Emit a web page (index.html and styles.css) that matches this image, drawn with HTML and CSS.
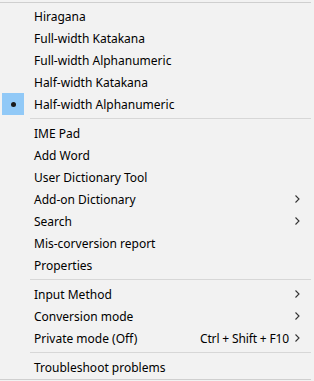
FILE: index.html
```html
<!DOCTYPE html>
<html lang="en">
<head>
    <meta charset="UTF-8">
    <meta name="viewport" content="width=device-width, initial-scale=1.0">
    <title>IME Menu</title>
    <link rel="stylesheet" href="styles.css">
</head>
<body>
    <div class="menu">
        <!-- Input modes -->
        <div class="menu-item"><span class="label">Hiragana</span></div>
        <div class="menu-item"><span class="label">Full-width Katakana</span></div>
        <div class="menu-item"><span class="label">Full-width Alphanumeric</span></div>
        <div class="menu-item"><span class="label">Half-width Katakana</span></div>
        <div class="menu-item checked">
            <span class="check"><span class="dot"></span></span>
            <span class="label">Half-width Alphanumeric</span>
        </div>

        <div class="separator"></div>

        <div class="menu-item"><span class="label">IME Pad</span></div>
        <div class="menu-item"><span class="label">Add Word</span></div>
        <div class="menu-item"><span class="label">User Dictionary Tool</span></div>
        <div class="menu-item">
            <span class="label">Add-on Dictionary</span>
            <svg class="arrow" width="5" height="8" viewBox="0 0 5 8"><polyline points="0.5,0.5 4,4 0.5,7.5" fill="none" stroke="#333" stroke-width="1.1"/></svg>
        </div>
        <div class="menu-item">
            <span class="label">Search</span>
            <svg class="arrow" width="5" height="8" viewBox="0 0 5 8"><polyline points="0.5,0.5 4,4 0.5,7.5" fill="none" stroke="#333" stroke-width="1.1"/></svg>
        </div>
        <div class="menu-item"><span class="label">Mis-corversion report</span></div>
        <div class="menu-item"><span class="label">Properties</span></div>

        <div class="separator"></div>

        <div class="menu-item">
            <span class="label">Input Method</span>
            <svg class="arrow" width="5" height="8" viewBox="0 0 5 8"><polyline points="0.5,0.5 4,4 0.5,7.5" fill="none" stroke="#333" stroke-width="1.1"/></svg>
        </div>
        <div class="menu-item">
            <span class="label">Conversion mode</span>
            <svg class="arrow" width="5" height="8" viewBox="0 0 5 8"><polyline points="0.5,0.5 4,4 0.5,7.5" fill="none" stroke="#333" stroke-width="1.1"/></svg>
        </div>
        <div class="menu-item">
            <span class="label">Private mode (Off)</span>
            <span class="shortcut">Ctrl + Shift + F10</span>
            <svg class="arrow" width="5" height="8" viewBox="0 0 5 8"><polyline points="0.5,0.5 4,4 0.5,7.5" fill="none" stroke="#333" stroke-width="1.1"/></svg>
        </div>

        <div class="separator"></div>

        <div class="menu-item"><span class="label">Troubleshoot problems</span></div>
    </div>
</body>
</html>
```

FILE: styles.css
```css
body {
    margin: 0;
    background-color: #f2f2f2;
    font-family: "Noto Sans", "Open Sans", sans-serif;
    font-size: 12px;
    color: #000;
}

.menu {
    margin-top: 2px;
    width: 311px;
    padding: 2px 0 1px 0;
    border-top: 1px solid #cfcfcf;
    border-bottom: 1px solid #cfcfcf;
    background-color: #f2f2f2;
}

.menu-item {
    position: relative;
    display: flex;
    align-items: center;
    height: 22px;
    padding-left: 34px;
    padding-right: 11px;
}

.label {
    flex: 1;
    white-space: nowrap;
}

.shortcut {
    margin-right: 3px;
    white-space: nowrap;
    letter-spacing: -0.15px;
}

.arrow {
    margin-left: 3px;
}

/* checkmark square for the active mode */
.check {
    position: absolute;
    left: 2px;
    top: 0;
    width: 22px;
    height: 22px;
    background-color: #91c9f7;
    display: flex;
    align-items: center;
    justify-content: center;
}

.dot {
    width: 5px;
    height: 5px;
    border-radius: 50%;
    background-color: #1a1a1a;
}

.separator {
    height: 1px;
    margin: 3px 0 3px 30px;
    background-color: #d7d7d7;
}
```
